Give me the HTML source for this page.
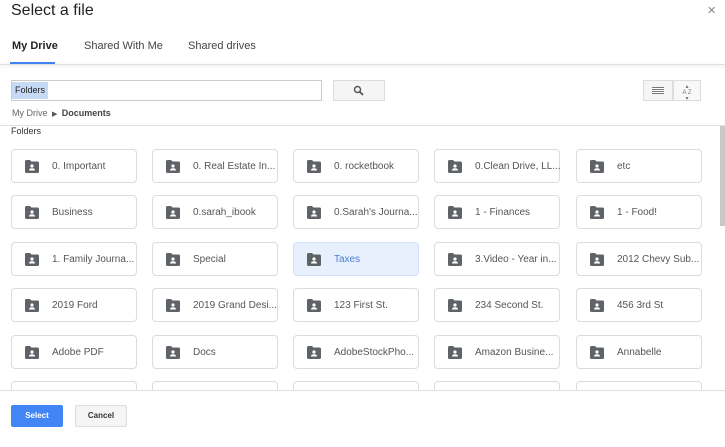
<!DOCTYPE html>
<html><head><style>
*{box-sizing:border-box;margin:0;padding:0}
body{width:725px;height:447px;overflow:hidden;background:#fff;font-family:"Liberation Sans",Arial,sans-serif;position:relative;color:#333}
.abs{position:absolute}
.card{position:absolute;width:126px;height:34px;border:1px solid #dadce0;border-radius:4px;background:#fff;font-size:10px;color:#555;white-space:nowrap}
.card svg{position:absolute;left:13px;top:10px}
.card span{position:absolute;left:40px;top:11px}
.card.sel{background:#e8f0fe;border-color:#d2e3fc;color:#4a7fd8}
</style></head><body>
<div class="abs" style="left:11px;top:2px;font-size:16px;color:#222">Select a file</div>
<div class="abs" style="left:707px;top:4px;font-size:11px;color:#888">✕</div>
<div class="abs" style="left:12px;top:40px;font-size:11px;font-weight:bold;color:#222">My Drive</div>
<div class="abs" style="left:84px;top:40px;font-size:11px;color:#444">Shared With Me</div>
<div class="abs" style="left:188px;top:40px;font-size:11px;color:#444">Shared drives</div>
<div class="abs" style="left:10px;top:62px;width:45px;height:2px;background:#4285f4"></div>
<div class="abs" style="left:0;top:64px;width:725px;height:1px;background:#e0e0e0;box-shadow:0 1px 3px rgba(0,0,0,.15)"></div>
<div class="abs" style="left:11px;top:80px;width:311px;height:21px;border:1px solid #ccc"></div>
<div class="abs" style="left:12px;top:82px;width:36px;height:17px;background:#c6d9f5;font-size:9px;color:#222;padding:3px 0 0 3px">Folders</div>
<div class="abs" style="left:333px;top:80px;width:52px;height:21px;border:1px solid #ddd;background:#f5f5f5"></div>
<svg class="abs" style="left:353px;top:85px" width="11" height="11" viewBox="0 0 11 11"><circle cx="4.5" cy="4.5" r="3" fill="none" stroke="#555" stroke-width="1.4"/><path d="M6.8 6.8 10 10" stroke="#555" stroke-width="1.8"/></svg>
<div class="abs" style="left:643px;top:80px;width:30px;height:21px;border:1px solid #ddd;background:#f5f5f5"></div>
<div class="abs" style="left:652px;top:87px;width:12px;height:7px;border-top:1px solid #777;border-bottom:1px solid #777;background:linear-gradient(#fff 0 1px,#777 1px 2px,#fff 2px 3px,#777 3px 4px,#fff 4px)"></div>
<div class="abs" style="left:673px;top:80px;width:28px;height:21px;border:1px solid #ddd;background:#f8f8f8;font-size:6px;color:#777;text-align:center;line-height:6px;padding-top:3px">▴<br>A Z<br>▾</div>
<div class="abs" style="left:12px;top:108px;font-size:9px;color:#666">My Drive <span style="font-size:7px;color:#555">&nbsp;▶&nbsp;</span> <b style="color:#444">Documents</b></div>
<div class="abs" style="left:0;top:125px;width:725px;height:1px;background:#e0e0e0"></div>
<div class="abs" style="left:11px;top:126px;font-size:9px;color:#333">Folders</div>
<div class="abs" style="left:720px;top:126px;width:5px;height:100px;background:#c8c8c8"></div>
<div id="g"></div>
<div class="abs" style="left:0;top:390px;width:725px;height:57px;background:#fff;border-top:1px solid #e0e0e0"></div>
<div class="abs" style="left:11px;top:405px;width:52px;height:22px;background:#4285f4;border-radius:2px;color:#fff;font-size:8px;font-weight:bold;text-align:center;line-height:22px">Select</div>
<div class="abs" style="left:75px;top:405px;width:52px;height:22px;background:#f5f5f5;border:1px solid #ddd;border-radius:2px;color:#333;font-size:8px;font-weight:bold;text-align:center;line-height:20px">Cancel</div>
<script>
var names=[["0. Important","0. Real Estate In...","0. rocketbook","0.Clean Drive, LL...","etc"],["Business","0.sarah_ibook","0.Sarah's Journa...","1 - Finances","1 - Food!"],["1. Family Journa...","Special","Taxes","3.Video - Year in...","2012 Chevy Sub..."],["2019 Ford","2019 Grand Desi...","123 First St.","234 Second St.","456 3rd St"],["Adobe PDF","Docs","AdobeStockPho...","Amazon Busine...","Annabelle"],["","","","",""]];
var xs=[11,152,293,434,576],ys=[149,195,242,288,335,381],h="";
var ic='<svg width="14" height="13" viewBox="0 0 14 13"><path d="M0 1.5Q0 0 1.5 0H5L6.5 1.5H12.5Q14 1.5 14 3V11.5Q14 13 12.5 13H1.5Q0 13 0 11.5Z" fill="#5f6368"/><circle cx="7" cy="6" r="1.6" fill="#fff"/><path d="M4 10.5Q4 8.3 7 8.3Q10 8.3 10 10.5Z" fill="#fff"/></svg>';
for(var r=0;r<6;r++)for(var c=0;c<5;c++){var n=names[r][c];h+='<div class="card'+(n=="Taxes"?" sel":"")+'" style="left:'+xs[c]+'px;top:'+ys[r]+'px">'+(n?ic+'<span>'+n+'</span>':'')+'</div>';}
document.getElementById("g").innerHTML=h;
</script>
</body></html>
